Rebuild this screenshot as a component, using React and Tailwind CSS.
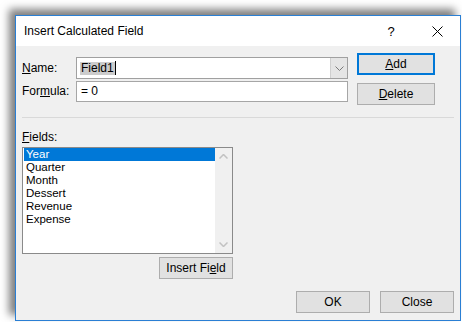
import React from "react";

function Btn({ children, className = "" }) {
  return (
    <div
      className={
        "h-[22px] w-[74px] flex items-center justify-center bg-[#e1e1e1] border border-[#adadad] " +
        className
      }
    >
      {children}
    </div>
  );
}

const items = ["Year", "Quarter", "Month", "Dessert", "Revenue", "Expense"];

export default function App() {
  return (
    <div className="w-[462px] h-[322px] bg-white pl-[15px] pt-[15px] overflow-hidden font-['Liberation_Sans',Arial,sans-serif] text-[12px] leading-[15px] text-black">
      <div className="w-[446px] h-[306px] border border-[#2a7fd4] flex flex-col shadow-[-6px_-6px_8px_rgba(0,0,0,0.5)]">
        {/* Title bar */}
        <div className="h-[30px] bg-white flex items-center pl-[8px] shrink-0">
          <span>Insert Calculated Field</span>
          <div className="ml-auto flex h-full">
            <div className="w-[46px] h-full flex items-center justify-center text-[13px]">?</div>
            <div className="w-[46px] h-full flex items-center justify-center">
              <svg width="11" height="11" viewBox="0 0 11 11">
                <path d="M0.5 0.5 L10.5 10.5 M10.5 0.5 L0.5 10.5" stroke="#000" strokeWidth="1" />
              </svg>
            </div>
          </div>
        </div>

        {/* Body */}
        <div className="flex-1 bg-[#f0f0f0] flex flex-col px-[6px]">
          <div className="flex items-start">
            <div className="mt-[11px] flex flex-col gap-[2px]">
              <div className="flex items-center h-[22px]">
                <span className="w-[54px]">
                  <span className="underline">N</span>ame:
                </span>
                <div className="w-[272px] h-[22px] border border-[#a0a0a0] bg-white flex items-center">
                  <div className="flex-1 pl-[3px] flex items-center">
                    <span className="bg-[#cccccc] leading-[13px] px-[1px]">Field1</span>
                    <span className="w-[1px] h-[14px] bg-black"></span>
                  </div>
                  <div className="w-[17px] h-full bg-[#e5e5e5] border-l border-[#cfcfcf] flex items-center justify-center">
                    <svg width="9" height="5" viewBox="0 0 9 5">
                      <path d="M0.5 0.5 L4.5 4.5 L8.5 0.5" stroke="#7a7a7a" strokeWidth="1" fill="none" />
                    </svg>
                  </div>
                </div>
              </div>
              <div className="flex items-center h-[21px]">
                <span className="w-[54px]">
                  For<span className="underline">m</span>ula:
                </span>
                <div className="w-[272px] h-[21px] border border-[#a6a6a6] bg-white flex items-center pl-[4px]">
                  = 0
                </div>
              </div>
            </div>
            <div className="ml-[9px] mt-[7px] flex flex-col gap-[8px]">
              <div className="h-[22px] w-[78px] flex items-center justify-center bg-[#e1e1e1] border-2 border-[#0078d7]">
                <span>
                  <span className="underline">A</span>dd
                </span>
              </div>
              <Btn className="w-[78px]">
                <span>
                  <span className="underline">D</span>elete
                </span>
              </Btn>
            </div>
          </div>

          <div className="mt-[12px] h-[1px] bg-[#d9d9d9]"></div>

          <div className="mt-[12px]">
            <span className="underline">F</span>ields:
          </div>

          <div className="w-[211px] mt-[2px] flex flex-col">
            <div className="h-[107px] border border-[#8a8a8a] bg-white flex">
              <div className="flex-1 flex flex-col">
                {items.map((it, i) => (
                  <div
                    key={it}
                    className={
                      "h-[13px] leading-[13px] text-[11.5px] ml-[1px] pl-[2px] " +
                      (i === 0 ? "bg-[#0078d7] text-white" : "")
                    }
                  >
                    {it}
                  </div>
                ))}
              </div>
              <div className="w-[17px] bg-[#f0f0f0] flex flex-col justify-between">
                <div className="h-[17px] flex items-center justify-center">
                  <svg width="9" height="5" viewBox="0 0 9 5">
                    <path d="M0.5 4.5 L4.5 0.5 L8.5 4.5" stroke="#c2c2c2" strokeWidth="1.5" fill="none" />
                  </svg>
                </div>
                <div className="h-[17px] flex items-center justify-center">
                  <svg width="9" height="5" viewBox="0 0 9 5">
                    <path d="M0.5 0.5 L4.5 4.5 L8.5 0.5" stroke="#c2c2c2" strokeWidth="1.5" fill="none" />
                  </svg>
                </div>
              </div>
            </div>
            <div className="flex justify-end mt-[3px]">
              <Btn>
                <span>
                  Insert Fi<span className="underline">e</span>ld
                </span>
              </Btn>
            </div>
          </div>

          <div className="mt-auto mb-[7px] flex justify-end gap-[10px]">
            <Btn>OK</Btn>
            <Btn>Close</Btn>
          </div>
        </div>
      </div>
    </div>
  );
}
